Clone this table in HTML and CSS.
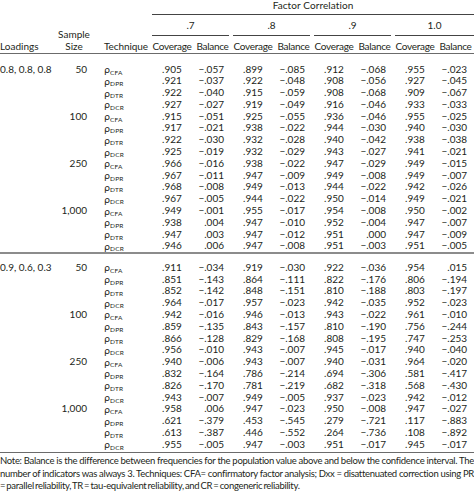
FILE: index.html
```html
<!DOCTYPE html>
<html>
<head>
<meta charset="utf-8">
<link rel="stylesheet" href="styles.css">
</head>
<body>
<table class="tbl">
<colgroup>
<col class="c-load"><col class="c-size"><col class="c-tech">
<col class="c-cov"><col class="c-bal"><col class="c-cov"><col class="c-bal">
<col class="c-cov"><col class="c-bal"><col class="c-cov"><col class="c-bal">
</colgroup>
<thead>
<tr>
<th rowspan="3" class="h-load">Loadings</th>
<th rowspan="3" class="h-size">Sample<br>Size</th>
<th rowspan="3" class="h-tech">Technique</th>
<th colspan="8" class="h-fc"><div class="fc">Factor Correlation</div></th>
</tr>
<tr>
<th colspan="2" class="h-grp"><div class="grp">.7</div></th>
<th colspan="2" class="h-grp"><div class="grp">.8</div></th>
<th colspan="2" class="h-grp"><div class="grp">.9</div></th>
<th colspan="2" class="h-grp"><div class="grp last">1.0</div></th>
</tr>
<tr>
<th class="h-sub">Coverage</th><th class="h-sub">Balance</th>
<th class="h-sub">Coverage</th><th class="h-sub">Balance</th>
<th class="h-sub">Coverage</th><th class="h-sub">Balance</th>
<th class="h-sub">Coverage</th><th class="h-sub">Balance</th>
</tr>
</thead>
<tbody id="body"></tbody>
</table>
<p class="note"><span class="ln">Note: Balance is the difference between frequencies for the population value above and below the confidence interval. The</span><span class="ln">number of indicators was always 3. Techniques: CFA= confirmatory factor analysis; Dxx = disattenuated correction using PR</span><span class="ln last">= parallel reliability, TR = tau-equivalent reliability, and CR = congeneric reliability.</span></p>
<script src="app.js"></script>
</body>
</html>
```
FILE: styles.css
```css
html, body {
  margin: 0;
  padding: 0;
  background: #fff;
}
body {
  width: 474px;
  overflow: hidden;
  font-family: Lato, "Open Sans", sans-serif;
  font-size: 10px;
  color: #231f20;
}
.tbl {
  border-collapse: separate;
  border-spacing: 0;
  table-layout: fixed;
  width: 474px;
  margin-top: -1px;
  font-variant-numeric: tabular-nums;
}
.c-load { width: 58px; }
.c-size { width: 32px; }
.c-tech { width: 60px; }
.c-cov { width: 44px; }
.c-bal { width: 37px; }

th {
  font-weight: normal;
  padding: 0;
  line-height: 12px;
}
.h-load, .h-size, .h-tech {
  vertical-align: bottom;
  padding-bottom: 1px;
  border-bottom: 1px solid #6b6b6b;
}
.h-load { text-align: left; }
.h-size { text-align: center; }
.h-tech { text-align: left; padding-left: 14px; letter-spacing: -0.1px; }

.fc {
  margin-left: 2px;
  padding-bottom: 3px;
  border-bottom: 1px solid #444;
  text-align: center;
  letter-spacing: 0.1px;
}
.grp {
  margin: 0 2px;
  padding: 4px 0 4px;
  border-bottom: 1px solid #444;
  text-align: center;
}
.grp.last { margin-right: 0; }
.h-sub {
  padding: 4px 0 1px;
  text-align: center;
  border-bottom: 1px solid #6b6b6b;
  letter-spacing: -0.3px;
}

td {
  padding: 0;
  height: 11.8px;
  line-height: 11.8px;
  white-space: nowrap;
}
td.load { text-align: left; }
td.size { text-align: right; padding-right: 3px; }
td.tech { padding-left: 14px; }
td.cov { text-align: center; }
td.bal { text-align: right; padding-right: 7px; }

tr.first td { padding-top: 9.5px; }
tr.sep td {
  padding-top: 7.5px;
  border-top: 2px solid #8c8c8c;
}
tr.end td {
  padding-bottom: 1.5px;
  border-bottom: 1px solid #6b6b6b;
}

.rho {
  font-family: "DejaVu Sans", "Noto Sans", sans-serif;
  font-size: 9.5px;
  line-height: 0;
  position: relative;
  top: 0.5px;
}
.sub {
  font-size: 6.5px;
  line-height: 0;
  letter-spacing: 0.2px;
  position: relative;
  top: 2px;
}

.note {
  margin: 2px 0 0;
  line-height: 12.5px;
  font-size: 9.5px;
  letter-spacing: -0.3px;
  word-spacing: -1px;
}
.ln {
  display: block;
  text-align: justify;
  text-align-last: justify;
}
.ln.last {
  text-align-last: left;
}
```
FILE: app.js
```js
var groups = [
  { load: "0.8, 0.8, 0.8", sizes: [
    ["50", [
      ["CFA", ".905 −.057 .899 −.085 .912 −.068 .955 −.023"],
      ["DPR", ".921 −.037 .922 −.048 .908 −.056 .927 −.045"],
      ["DTR", ".922 −.040 .915 −.059 .908 −.068 .909 −.067"],
      ["DCR", ".927 −.027 .919 −.049 .916 −.046 .933 −.033"]]],
    ["100", [
      ["CFA", ".915 −.051 .925 −.055 .936 −.046 .955 −.025"],
      ["DPR", ".917 −.021 .938 −.022 .944 −.030 .940 −.030"],
      ["DTR", ".922 −.030 .932 −.028 .940 −.042 .938 −.038"],
      ["DCR", ".925 −.019 .932 −.029 .943 −.027 .941 −.021"]]],
    ["250", [
      ["CFA", ".966 −.016 .938 −.022 .947 −.029 .949 −.015"],
      ["DPR", ".967 −.011 .947 −.009 .949 −.008 .949 −.007"],
      ["DTR", ".968 −.008 .949 −.013 .944 −.022 .942 −.026"],
      ["DCR", ".967 −.005 .944 −.022 .950 −.014 .949 −.021"]]],
    ["1,000", [
      ["CFA", ".949 −.001 .955 −.017 .954 −.008 .950 −.002"],
      ["DPR", ".938 .004 .947 −.010 .952 −.004 .947 −.007"],
      ["DTR", ".947 .003 .947 −.012 .951 .000 .947 −.009"],
      ["DCR", ".946 .006 .947 −.008 .951 −.003 .951 −.005"]]]
  ]},
  { load: "0.9, 0.6, 0.3", sizes: [
    ["50", [
      ["CFA", ".911 −.034 .919 −.030 .922 −.036 .954 .015"],
      ["DPR", ".851 −.143 .864 −.111 .822 −.176 .806 −.194"],
      ["DTR", ".852 −.142 .848 −.151 .810 −.188 .803 −.197"],
      ["DCR", ".964 −.017 .957 −.023 .942 −.035 .952 −.023"]]],
    ["100", [
      ["CFA", ".942 −.016 .946 −.013 .943 −.022 .961 −.010"],
      ["DPR", ".859 −.135 .843 −.157 .810 −.190 .756 −.244"],
      ["DTR", ".866 −.128 .829 −.168 .808 −.195 .747 −.253"],
      ["DCR", ".956 −.010 .943 −.007 .945 −.017 .940 −.040"]]],
    ["250", [
      ["CFA", ".940 −.006 .943 −.007 .940 −.031 .964 −.020"],
      ["DPR", ".832 −.164 .786 −.214 .694 −.306 .581 −.417"],
      ["DTR", ".826 −.170 .781 −.219 .682 −.318 .568 −.430"],
      ["DCR", ".943 −.007 .949 −.005 .937 −.023 .942 −.012"]]],
    ["1,000", [
      ["CFA", ".958 .006 .947 −.023 .950 −.008 .947 −.027"],
      ["DPR", ".621 −.379 .453 −.545 .279 −.721 .117 −.883"],
      ["DTR", ".613 −.387 .446 −.552 .264 −.736 .108 −.892"],
      ["DCR", ".955 −.005 .947 −.003 .951 −.017 .945 −.017"]]]
  ]}
];

var tbody = document.getElementById("body");
var html = "";
groups.forEach(function (g, gi) {
  g.sizes.forEach(function (s, si) {
    s[1].forEach(function (r, ri) {
      var cls = [];
      if (si === 0 && ri === 0) cls.push(gi === 0 ? "first" : "sep");
      if (gi === groups.length - 1 && si === g.sizes.length - 1 && ri === s[1].length - 1) cls.push("end");
      html += '<tr class="' + cls.join(" ") + '">';
      html += '<td class="load">' + (si === 0 && ri === 0 ? g.load : "") + "</td>";
      html += '<td class="size">' + (ri === 0 ? s[0] : "") + "</td>";
      html += '<td class="tech"><span class="rho">ρ</span><span class="sub">' + r[0] + "</span></td>";
      r[1].split(" ").forEach(function (v, vi) {
        html += '<td class="' + (vi % 2 === 0 ? "cov" : "bal") + '">' + v + "</td>";
      });
      html += "</tr>";
    });
  });
});
tbody.innerHTML = html;
```
